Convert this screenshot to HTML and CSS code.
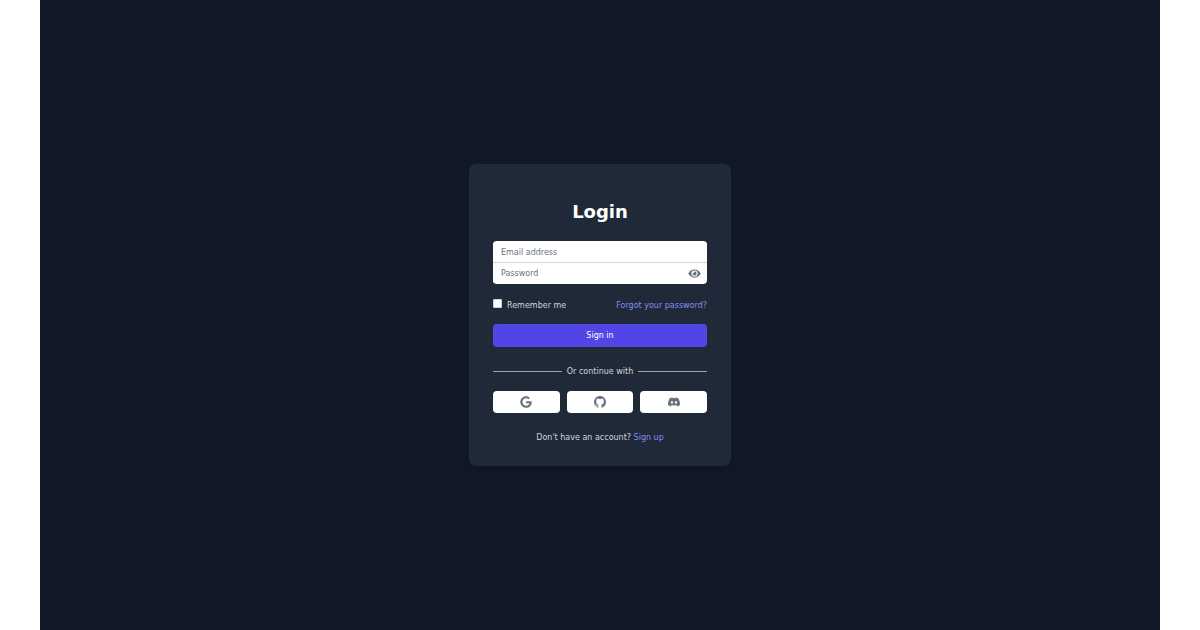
FILE: index.html
```html
<!DOCTYPE html>
<html lang="en">
<head>
<meta charset="utf-8">
<meta name="viewport" content="width=device-width, initial-scale=1">
<title>Login</title>
<link rel="stylesheet" href="styles.css">
</head>
<body>
<main class="page">
  <section class="card">
    <h1 class="title">Login</h1>
    <form class="form">
      <div class="fields">
        <div class="row">
          <input class="field" type="email" aria-label="Email address" placeholder="Email address">
        </div>
        <div class="row">
          <input class="field" type="password" aria-label="Password" placeholder="Password">
          <button class="reveal" type="button" aria-label="Show password">
            <svg width="13" height="11" viewBox="0 0 576 512" fill="currentColor"><path d="M572.52 241.4C518.29 135.59 410.93 64 288 64S57.68 135.64 3.48 241.41a32.35 32.35 0 0 0 0 29.19C57.71 376.41 165.07 448 288 448s230.32-71.64 284.52-177.41a32.35 32.35 0 0 0 0-29.19zM288 400a144 144 0 1 1 144-144 143.93 143.93 0 0 1-144 144zm0-240a95.31 95.31 0 0 0-25.31 3.79 47.85 47.85 0 0 1-66.9 66.9A95.78 95.78 0 1 0 288 160z"/></svg>
          </button>
        </div>
      </div>
      <div class="options">
        <label class="remember"><input class="check" type="checkbox">Remember me</label>
        <a class="link" href="#">Forgot your password?</a>
      </div>
      <button class="submit" type="submit">Sign in</button>
    </form>
    <div class="divider">Or continue with</div>
    <div class="providers">
      <button class="provider" type="button" aria-label="Google">
        <svg width="12" height="12" viewBox="0 0 488 512" fill="currentColor"><path d="M488 261.8C488 403.3 391.1 504 248 504 110.8 504 0 393.2 0 256S110.8 8 248 8c66.8 0 123 24.5 166.3 64.9l-67.5 64.9C258.5 52.6 94.3 116.6 94.3 256c0 86.5 69.1 156.6 153.7 156.6 98.2 0 135-70.4 140.8-106.9H248v-85.3h236.1c2.3 12.7 3.9 24.9 3.9 41.4z"/></svg>
      </button>
      <button class="provider" type="button" aria-label="GitHub">
        <svg width="12" height="12" viewBox="0 0 20 20" fill="currentColor"><path d="M10 0C4.477 0 0 4.484 0 10.017c0 4.425 2.865 8.18 6.839 9.504.5.092.682-.217.682-.483 0-.237-.008-.868-.013-1.703-2.782.605-3.369-1.343-3.369-1.343-.454-1.158-1.11-1.466-1.11-1.466-.908-.62.069-.608.069-.608 1.003.07 1.531 1.032 1.531 1.032.892 1.53 2.341 1.088 2.91.832.092-.647.35-1.088.636-1.338-2.22-.253-4.555-1.113-4.555-4.951 0-1.093.39-1.988 1.029-2.688-.103-.253-.446-1.272.098-2.65 0 0 .84-.27 2.75 1.026A9.564 9.564 0 0110 4.844c.85.004 1.705.115 2.504.337 1.909-1.296 2.747-1.027 2.747-1.027.546 1.379.203 2.398.1 2.651.64.7 1.028 1.595 1.028 2.688 0 3.848-2.339 4.695-4.566 4.942.359.31.678.921.678 1.856 0 1.338-.012 2.419-.012 2.747 0 .268.18.58.688.482A10.019 10.019 0 0020 10.017C20 4.484 15.522 0 10 0z"/></svg>
      </button>
      <button class="provider" type="button" aria-label="Discord">
        <svg width="12" height="12" viewBox="0 0 16 16" fill="currentColor"><path d="M13.545 2.907a13.227 13.227 0 0 0-3.257-1.011.05.05 0 0 0-.052.025c-.141.25-.297.577-.406.833a12.19 12.19 0 0 0-3.658 0 8.258 8.258 0 0 0-.412-.833.051.051 0 0 0-.052-.025c-1.125.194-2.22.534-3.257 1.011a.041.041 0 0 0-.021.018C.356 6.024-.213 9.047.066 12.032c.001.014.01.028.021.037a13.276 13.276 0 0 0 3.995 2.02.05.05 0 0 0 .056-.019c.308-.42.582-.863.818-1.329a.05.05 0 0 0-.01-.059.051.051 0 0 0-.018-.011 8.875 8.875 0 0 1-1.248-.595.05.05 0 0 1-.02-.066.051.051 0 0 1 .015-.019c.084-.063.168-.129.248-.195a.05.05 0 0 1 .051-.007c2.619 1.196 5.454 1.196 8.041 0a.052.052 0 0 1 .053.007c.08.066.164.132.248.195a.051.051 0 0 1-.004.085 8.254 8.254 0 0 1-1.249.594.05.05 0 0 0-.03.03.052.052 0 0 0 .003.041c.24.465.515.909.817 1.329a.05.05 0 0 0 .056.019 13.235 13.235 0 0 0 4.001-2.02.049.049 0 0 0 .021-.037c.334-3.451-.559-6.449-2.366-9.106a.034.034 0 0 0-.02-.019zm-8.198 7.307c-.789 0-1.438-.724-1.438-1.612 0-.889.637-1.613 1.438-1.613.807 0 1.45.73 1.438 1.613 0 .888-.637 1.612-1.438 1.612zm5.316 0c-.788 0-1.438-.724-1.438-1.612 0-.889.637-1.613 1.438-1.613.807 0 1.451.73 1.438 1.613 0 .888-.631 1.612-1.438 1.612z"/></svg>
      </button>
    </div>
    <p class="signup">Don't have an account? <a class="link" href="#">Sign up</a></p>
  </section>
</main>
</body>
</html>
```

FILE: styles.css
```css
* {
  box-sizing: border-box;
}

body {
  margin: 0;
  padding: 0 40px;
  background: #fff;
  font: 8px/13px "DejaVu Sans", sans-serif;
  color: #d1d5db;
}

button,
input {
  margin: 0;
  border: 0;
  font: inherit;
}

button {
  cursor: pointer;
}

svg {
  display: block;
}

.page {
  display: flex;
  align-items: center;
  justify-content: center;
  min-height: 100vh;
  background: #111827;
}

.card {
  width: 100%;
  max-width: 262px;
  padding: 37px 24px 22px;
  border-radius: 7px;
  background: #1f2937;
  box-shadow: 0 6px 9px -2px rgb(0 0 0 / 0.1), 0 2px 4px -2px rgb(0 0 0 / 0.1);
}

.title {
  margin: 0 0 18px;
  font-size: 18px;
  line-height: 22px;
  font-weight: 700;
  text-align: center;
  color: #fff;
}

.fields {
  overflow: hidden;
  padding: 1px 0;
  border-radius: 4px;
  background: #fff;
}

.row {
  display: flex;
  align-items: center;
}

.row + .row {
  border-top: 1px solid #d1d5db;
}

.field {
  flex: 1;
  min-width: 0;
  height: 20px;
  padding: 0 8px;
  background: #fff;
  color: #111827;
  outline: none;
}

.field::placeholder {
  color: #6b7280;
  opacity: 1;
}

.reveal {
  padding: 0 6px 0 0;
  background: none;
  color: #6b7280;
}

.options {
  display: flex;
  align-items: center;
  justify-content: space-between;
  margin: 15px 0 12px;
}

.remember {
  display: flex;
  align-items: baseline;
  gap: 5px;
}

.check {
  appearance: none;
  width: 9px;
  height: 9px;
  border: 1px solid #d1d5db;
  border-radius: 1px;
  background: #fff;
}

.check:checked {
  background: #4f46e5;
}

.link {
  color: #818cf8;
  text-decoration: none;
}

.submit {
  display: block;
  width: 100%;
  height: 23px;
  padding: 0;
  border-radius: 4px;
  background: #4f46e5;
  color: #fff;
}

.divider {
  display: flex;
  align-items: center;
  gap: 5px;
  margin: 18px 0 13px;
}

.divider::before,
.divider::after {
  content: "";
  flex: 1;
  height: 1px;
  background: #9ca3af;
}

.providers {
  display: grid;
  grid-template-columns: repeat(3, 1fr);
  gap: 7px;
}

.provider {
  display: flex;
  align-items: center;
  justify-content: center;
  height: 22px;
  padding: 0;
  border-radius: 4px;
  background: #fff;
  color: #6b7280;
}

.signup {
  margin: 18px 0 0;
  text-align: center;
}
```
